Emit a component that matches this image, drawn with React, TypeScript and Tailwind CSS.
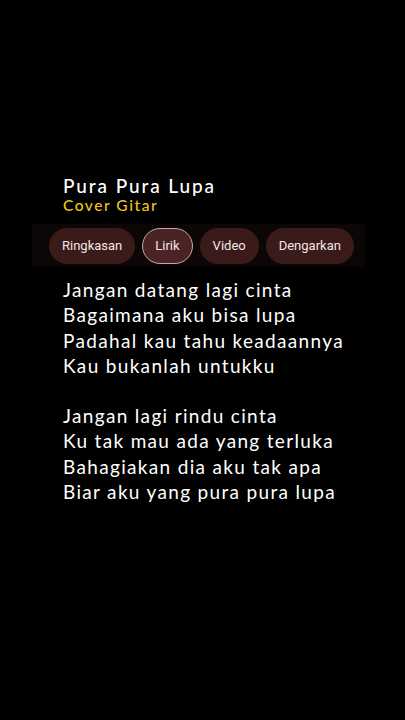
export default function App() {
  const tabs = ['Ringkasan', 'Lirik', 'Video', 'Dengarkan']
  const verses = [
    ['Jangan datang lagi cinta', 'Bagaimana aku bisa lupa', 'Padahal kau tahu keadaannya', 'Kau bukanlah untukku'],
    ['Jangan lagi rindu cinta', 'Ku tak mau ada yang terluka', 'Bahagiakan dia aku tak apa', 'Biar aku yang pura pura lupa'],
  ]

  return (
    <div className="min-h-[720px] w-[405px] bg-black text-white">
      <div className="pt-[175px]">
        {/* Title */}
        <div className="pl-[63px] font-['Lato',sans-serif]">
          <h1 className="text-[19px] leading-[21px] font-medium tracking-[0.1em]">Pura Pura Lupa</h1>
          <p className="text-[15.5px] leading-[18px] font-medium tracking-[0.1em] text-[#f2c31c]">Cover Gitar</p>
        </div>

        {/* Tabs */}
        <div className="mt-[10px] ml-[32px] w-[333px] h-[43px] bg-[#0b0707] flex items-center gap-[7px] pl-[17px]">
          {tabs.map((t) => (
            <div
              key={t}
              className={
                t === 'Lirik'
                  ? "h-[36px] px-[12px] rounded-full bg-[#4a2424] border border-[#c8a8a8] flex items-center text-[13px] text-[#f3e6e6] font-['Roboto',sans-serif]"
                  : "h-[36px] px-[13px] rounded-full bg-[#3b1a1a] flex items-center text-[13px] text-[#f3e6e6] font-['Roboto',sans-serif]"
              }
            >
              {t}
            </div>
          ))}
        </div>

        {/* Lyrics */}
        <div className="mt-[10px] pl-[63px] font-['Lato',sans-serif] text-[19px] leading-[25.3px] tracking-[0.07em] space-y-[25px]">
          {verses.map((v, i) => (
            <div key={i}>
              {v.map((line) => (
                <p key={line}>{line}</p>
              ))}
            </div>
          ))}
        </div>
      </div>
    </div>
  )
}
